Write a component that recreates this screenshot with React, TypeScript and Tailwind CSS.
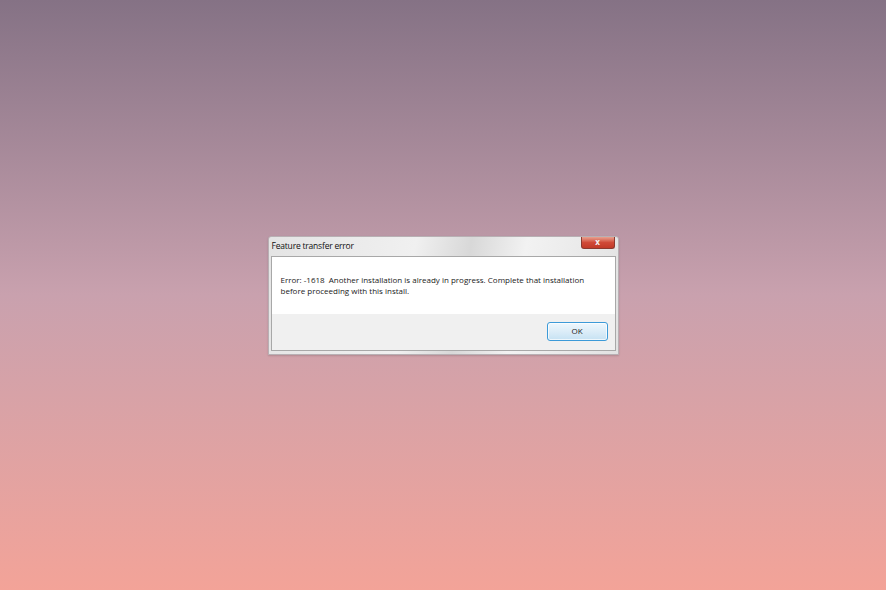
export default function App() {
  return (
    <div className="w-[886px] h-[590px] bg-gradient-to-b from-[#857285] via-[#c9a1ae] to-[#f3a398] flex items-center justify-center">
      <div
        className="w-[351px] h-[119px] flex flex-col rounded-t-[3px] border border-[#b8b0b4] bg-[linear-gradient(100deg,#e4e4e4_0%,#f0f0f0_40%,#d8d8d8_55%,#f2f2f2_70%,#e2e2e2_100%)] px-[2px] pb-[3px] shadow-[0_1px_2px_rgba(0,0,0,0.15)]"
        style={{ fontFamily: '"Open Sans", "Noto Sans", sans-serif' }}
      >
        <div className="h-[19px] flex items-start justify-between">
          <span className="pl-[1px] pt-[3px] text-[8.5px] leading-[12px] text-[#111] tracking-[-0.2px]">Feature transfer error</span>
          <div className="w-[34px] h-[12px] mr-[1px] rounded-b-[3px] border border-[#8a3a30] border-t-0 bg-gradient-to-b from-[#e8a090] via-[#d04a38] to-[#c23a28] flex items-center justify-center">
            <span className="text-[8px] leading-none font-bold text-[#f4f4f4]">x</span>
          </div>
        </div>
        <div className="flex-1 flex flex-col border border-[#a8a8a8] bg-white">
          <div className="h-[57px] px-[9px] pt-[17px] text-[8px] leading-[11.5px] text-[#1a1a1a]">
            <p>Error: -1618&nbsp; Another installation is already in progress. Complete that installation</p>
            <p>before proceeding with this install.</p>
          </div>
          <div className="flex-1 bg-[#f0f0f0] flex items-start justify-end pt-[8px] pr-[7px]">
            <button className="w-[61px] h-[19px] rounded-[3px] border border-[#3c9ad8] bg-gradient-to-b from-[#eef7fd] via-[#dcedf8] to-[#c6e2f3] text-[8px] text-[#222] leading-none shadow-[inset_0_0_0_1px_rgba(255,255,255,0.7)]">
              OK
            </button>
          </div>
        </div>
      </div>
    </div>
  );
}
